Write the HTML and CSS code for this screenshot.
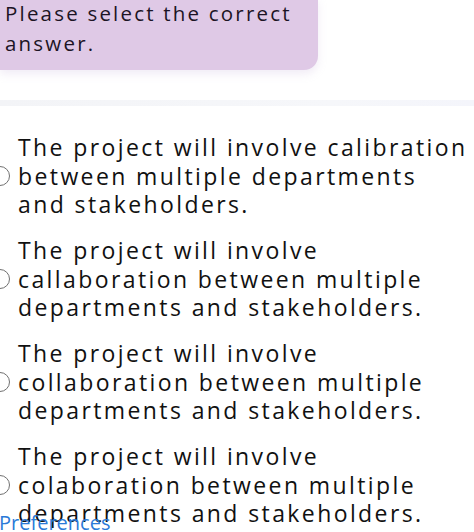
FILE: index.html
```html
<!DOCTYPE html>
<html lang="en">
<head>
<meta charset="utf-8">
<title>Question</title>
<link rel="stylesheet" href="styles.css">
</head>
<body>
<div class="page">
  <div class="prompt">Please select the correct answer.</div>
  <div class="divider"></div>
  <ul class="options">
    <li class="option"><span class="radio"></span><span class="label">The project will involve calibration between multiple departments and stakeholders.</span></li>
    <li class="option"><span class="radio"></span><span class="label">The project will involve callaboration between multiple departments and stakeholders.</span></li>
    <li class="option"><span class="radio"></span><span class="label">The project will involve collaboration between multiple departments and stakeholders.</span></li>
    <li class="option"><span class="radio"></span><span class="label">The project will involve colaboration between multiple departments and stakeholders.</span></li>
  </ul>
  <a class="prefs" href="#">Preferences</a>
</div>
</body>
</html>
```
FILE: styles.css
```css
html, body {
  margin: 0;
  padding: 0;
  background: #ffffff;
}
body {
  font-family: "Open Sans", "Noto Sans", sans-serif;
  color: #111111;
  width: 474px;
  height: 532px;
  overflow: hidden;
}
.page {
  position: relative;
  height: 532px;
}
.prompt {
  box-sizing: border-box;
  width: 318px;
  height: 72px;
  margin-top: -2px;
  padding: 0 5px;
  background: #dfc9e6;
  border-bottom-right-radius: 14px;
  box-shadow: 0 4px 8px rgba(200, 180, 220, 0.25);
  font-size: 20.5px;
  line-height: 30px;
  letter-spacing: 2.2px;
  color: #1c1424;
}
.divider {
  margin-top: 30px;
  height: 6px;
  background: linear-gradient(to right, #f3f4f7, #f6f7fa 70%, #f4f5fb);
}
.options {
  list-style: none;
  margin: 27px 0 0 0;
  padding: 0;
  display: flex;
  flex-direction: column;
  gap: 17.5px;
}
.option {
  display: flex;
  align-items: center;
  gap: 8px;
}
.radio {
  flex: none;
  width: 20px;
  height: 20px;
  margin-left: -10px;
  border: 1.5px solid #707070;
  border-radius: 50%;
  box-sizing: border-box;
  background: #fff;
}
.label {
  font-size: 23px;
  line-height: 28.5px;
  letter-spacing: 2.4px;
  width: 452px;
}
.prefs {
  position: absolute;
  left: -1px;
  top: 513px;
  font-size: 20px;
  line-height: 24px;
  color: #2a7ad8;
  text-decoration: none;
  z-index: 0;
}
```
